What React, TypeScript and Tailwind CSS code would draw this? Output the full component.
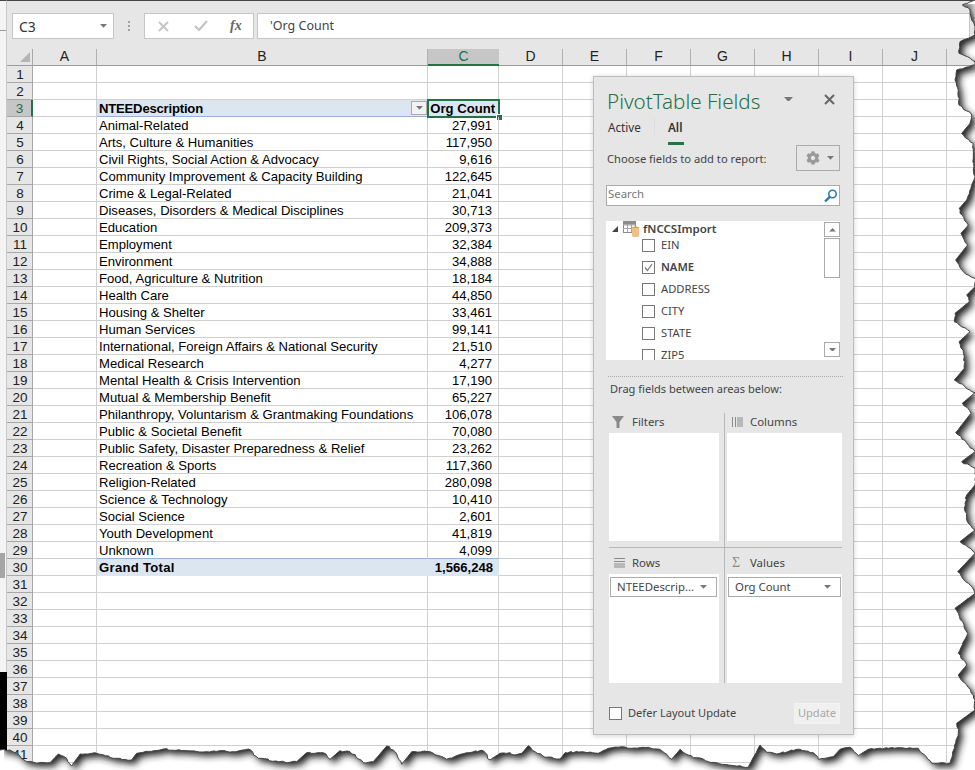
import { FaCog } from 'react-icons/fa';

const rows: [string, string][] = [
  ['Animal-Related', '27,991'],
  ['Arts, Culture & Humanities', '117,950'],
  ['Civil Rights, Social Action & Advocacy', '9,616'],
  ['Community Improvement & Capacity Building', '122,645'],
  ['Crime & Legal-Related', '21,041'],
  ['Diseases, Disorders & Medical Disciplines', '30,713'],
  ['Education', '209,373'],
  ['Employment', '32,384'],
  ['Environment', '34,888'],
  ['Food, Agriculture & Nutrition', '18,184'],
  ['Health Care', '44,850'],
  ['Housing & Shelter', '33,461'],
  ['Human Services', '99,141'],
  ['International, Foreign Affairs & National Security', '21,510'],
  ['Medical Research', '4,277'],
  ['Mental Health & Crisis Intervention', '17,190'],
  ['Mutual & Membership Benefit', '65,227'],
  ['Philanthropy, Voluntarism & Grantmaking Foundations', '106,078'],
  ['Public & Societal Benefit', '70,080'],
  ['Public Safety, Disaster Preparedness & Relief', '23,262'],
  ['Recreation & Sports', '117,360'],
  ['Religion-Related', '280,098'],
  ['Science & Technology', '10,410'],
  ['Social Science', '2,601'],
  ['Youth Development', '41,819'],
  ['Unknown', '4,099'],
];

const rightCols = ['D', 'E', 'F', 'G', 'H', 'I', 'J'];
const ui = "font-['Noto_Sans',sans-serif]";
const cellFont = "font-['Liberation_Sans',Arial,sans-serif]";

// torn edge, traced from the shot: [x, y] going from bottom left, along the bottom, up the right side
const bottomA = [[0,60],[30,60],[50,70],[80,95],[110,100],[150,98],[175,72],[200,85],[215,108],[240,72],[290,70],[340,85],[395,90],[410,70],[490,57],[620,65],[660,62],[700,65],[745,57],[775,85],[855,97],[890,95],[920,68],[970,68],[990,88],[1020,62],[1050,65],[1090,98],[1120,95],[1160,48],[1180,60],[1205,103],[1235,65],[1290,65],[1340,88],[1400,68],[1450,62]].map(([x, y]) => [x / 3, 730 + y / 3]);
const bottomB = [[15,90],[45,70],[75,68],[90,75],[110,70],[130,47],[150,65],[180,82],[225,87],[240,68],[290,65],[340,70],[370,55],[410,50],[440,55],[490,52],[530,62],[560,88],[585,58],[610,75],[670,95],[730,105],[790,112],[825,45],[845,67],[875,72],[935,58],[985,68],[1000,88],[1045,80],[1065,58],[1095,52],[1120,77],[1150,58],[1210,55],[1300,55],[1340,100],[1395,100]].map(([x, y]) => [485 + x / 3, 730 + y / 3]);
const rightLow = [[100,1060],[95,1030],[150,990],[150,960],[145,945],[100,885],[125,855],[100,820],[128,760],[90,685],[150,640],[130,610],[98,575],[150,520],[105,485],[150,450],[130,430],[118,385],[125,345],[150,315],[150,265],[110,245],[150,215],[92,158],[138,100],[112,70],[150,38]].map(([x, y]) => [925 + x / 3, 380 + y / 3]);
const rightHigh = [[88,1140],[118,1105],[118,1070],[102,1025],[135,995],[88,965],[90,940],[133,905],[125,885],[150,860],[150,835],[115,815],[92,780],[128,735],[108,700],[130,675],[105,640],[103,625],[125,600],[150,530],[145,510],[145,430],[110,400],[135,370],[140,345],[102,315],[100,270],[90,240],[95,210],[150,195],[150,185],[102,160],[105,125],[150,105],[150,80],[140,60],[135,30],[112,15],[150,0]].map(([x, y]) => [925 + x / 3, y / 3]);
const edge = [...bottomA, ...bottomB, ...rightLow, ...rightHigh];

function roughPath(pts: number[][]) {
  let out = '';
  let n = 0;
  pts.forEach((p, i) => {
    if (i === 0) {
      out = `M${p[0]} ${p[1]}`;
      return;
    }
    const prev = pts[i - 1];
    const steps = Math.max(1, Math.round(Math.hypot(p[0] - prev[0], p[1] - prev[1]) / 3));
    for (let s = 1; s <= steps; s++) {
      n++;
      const r = Math.sin(n * 12.9898) * 43758.5453;
      const j = s === steps ? 0 : (r - Math.floor(r) - 0.5) * 1.6;
      const x = prev[0] + ((p[0] - prev[0]) * s) / steps;
      const y = prev[1] + ((p[1] - prev[1]) * s) / steps;
      out += `L${(x + j).toFixed(1)} ${(y - j).toFixed(1)}`;
    }
  });
  return out;
}

const edgeLine = roughPath(edge);
const sheetShape = edgeLine + 'L975 0L0 0Z';
const outside = 'M0 0H975V770H0Z ' + sheetShape;

function Chevron({ className = '', w = 7 }: { className?: string; w?: number }) {
  return (
    <svg width={w} height={w * 0.55} viewBox="0 0 9 5" className={className}>
      <path d="M0 0h9L4.500 5z" fill="#777" />
    </svg>
  );
}

function Box({ checked }: { checked?: boolean }) {
  return (
    <div className="w-[13px] h-[13px] border border-[#777] bg-white flex items-center justify-center shrink-0">
      {checked && (
        <svg width="11" height="11" viewBox="0 0 11 11" fill="none" stroke="#777" strokeWidth="1.2">
          <path d="M2 5.500l2.500 3L9 2" />
        </svg>
      )}
    </div>
  );
}

function Field({ name, checked }: { name: string; checked?: boolean }) {
  return (
    <div className="h-[22px] shrink-0 flex items-center pl-[36px] gap-[6px]">
      <Box checked={checked} />
      <span className={`text-[11.2px] text-[#444] ${checked ? 'font-semibold' : ''}`}>{name}</span>
    </div>
  );
}

function Pill({ label, width }: { label: string; width: string }) {
  return (
    <div className={`${width} h-[20px] mx-[1px] mt-[2px] border border-[#ababab] bg-white flex items-center justify-between pl-[6px] pr-[9px]`}>
      <span className="text-[11.4px] text-[#444] whitespace-nowrap">{label}</span>
      <Chevron />
    </div>
  );
}

function PivotPanel() {
  return (
    <div className={`absolute left-[593px] top-[76px] w-[261px] h-[659px] bg-[#e6e6e6] border border-[#bdbdbd] shadow-[0_1px_5px_rgba(0,0,0,0.18)] ${ui}`}>
      {/* title */}
      <div className="mt-[12px] h-[24px] pl-[13px] flex items-center">
        <div className="w-[177px] text-[20.6px] font-light text-[#217346] leading-none whitespace-nowrap">PivotTable Fields</div>
        <Chevron w={9} className="-translate-y-[2px]" />
        <svg width="11" height="11" viewBox="0 0 11 11" className="ml-[31px] -translate-y-[2px]" stroke="#666" strokeWidth="2">
          <path d="M1 1l9 9M10 1l-9 9" />
        </svg>
      </div>

      {/* tabs */}
      <div className="mt-[5px] h-[27px] flex text-[11.7px] text-[#333]">
        <div className="ml-[14px] w-[46px] h-[18px] leading-[18px]">Active</div>
        <div className="w-px h-[17px] bg-[#dedede]" />
        <div className="ml-[13px] w-[16px] flex flex-col">
          <div className="h-[24px] leading-[18px] font-semibold">All</div>
          <div className="h-[3px] bg-[#217346]" />
        </div>
      </div>

      <div className="h-[26px] pl-[13px] pr-[13px] flex items-center justify-between">
        <span className="pt-[2px] text-[11.2px] text-[#444] whitespace-nowrap">Choose fields to add to report:</span>
        <div className="w-[44px] h-[26px] border border-[#ababab] flex items-center pl-[9px] gap-[7px]">
          <FaCog className="w-[14px] h-[14px] text-[#999]" />
          <Chevron />
        </div>
      </div>

      {/* search */}
      <div className="mt-[14px] ml-[12px] w-[234px] h-[21px] bg-white border border-[#ababab] flex items-center justify-between pl-[1px] pr-[1px]">
        <span className="pb-[3px] text-[11.4px] text-[#777]">Search</span>
        <svg width="14" height="14" viewBox="0 0 14 14" fill="none" stroke="#2b79b9" strokeWidth="1.6">
          <circle cx="8.500" cy="5" r="3.700" />
          <path d="M5.800 7.800L1 12.500" strokeWidth="2.400" />
        </svg>
      </div>

      {/* field list */}
      <div className="mt-[15px] ml-[12px] w-[234px] h-[139px] bg-white flex overflow-hidden">
        <div className="flex-1 flex flex-col">
          <div className="h-[16px] -mb-[3px] shrink-0 flex items-center pl-[6px]">
            <svg width="6" height="6" viewBox="0 0 6 6"><path d="M6 0v6H0z" fill="#444" /></svg>
            <svg width="17" height="16" viewBox="0 0 17 16" className="ml-[5px]">
              <rect x="0.500" y="0.500" width="12" height="11" fill="#fff" stroke="#8c8c8c" />
              <path d="M0 4h12M0 7.500h12M4.500 1v10M8.500 1v10" stroke="#a8a8a8" />
              <path d="M0.500 0.500h12v3h-12z" fill="#8c8c8c" />
              <ellipse cx="12.500" cy="7" rx="3.500" ry="1.500" fill="#d99a4e" />
              <rect x="9" y="7" width="7" height="8" fill="#efc08a" />
              <ellipse cx="12.500" cy="15" rx="3.500" ry="1" fill="#efc08a" />
            </svg>
            <span className="ml-[3px] text-[11.5px] font-semibold text-[#444]">fNCCSImport</span>
          </div>
          <Field name="EIN" />
          <Field name="NAME" checked />
          <Field name="ADDRESS" />
          <Field name="CITY" />
          <Field name="STATE" />
          <Field name="ZIP5" />
        </div>
        <div className="w-[16px] flex flex-col pb-[3px] pt-[1px]">
          <div className="h-[15px] border border-[#ababab] flex items-center justify-center">
            <Chevron className="rotate-180" />
          </div>
          <div className="h-[40px] mt-px bg-white border border-[#ababab]" />
          <div className="flex-1" />
          <div className="h-[15px] border border-[#ababab] flex items-center justify-center">
            <Chevron />
          </div>
        </div>
      </div>

      <div className="mt-[16px] ml-[14px] w-[235px] border-t border-dotted border-[#aaa]" />
      <div className="mt-[4px] ml-[16px] h-[16px] leading-[16px] text-[11.05px] text-[#444] whitespace-nowrap">Drag fields between areas below:</div>

      {/* areas */}
      <div className="mt-[16px] ml-[15px] w-[233px] grid grid-cols-[116px_1fr] text-[11.4px] text-[#444]">
        <div className="border-r border-[#b8b8b8] h-[134px]">
          <div className="h-[20px] pb-[2px] flex items-center pl-[3px]">
            <svg width="12" height="12" viewBox="0 0 12 12"><path d="M0 0h12L7.500 6v6h-3V6z" fill="#8a8a8a" /></svg>
            <span className="ml-[8px]">Filters</span>
          </div>
          <div className="w-[110px] h-[108px] bg-white" />
        </div>
        <div className="h-[134px] pl-[2px]">
          <div className="h-[20px] pb-[2px] flex items-center pl-[5px]">
            <svg width="11" height="10" viewBox="0 0 11 10"><path d="M.5 0v10M3.500 0v10M6 0v10M8 0v10M10 0v10" stroke="#8a8a8a" /></svg>
            <span className="ml-[7px]">Columns</span>
          </div>
          <div className="w-[115px] h-[108px] bg-white" />
        </div>
        <div className="col-span-2 h-px bg-[#b8b8b8]" />
        <div className="border-r border-[#b8b8b8] h-[135px]">
          <div className="h-[26px] pt-[4px] flex items-center pl-[5px]">
            <svg width="11" height="10" viewBox="0 0 11 10"><path d="M0 .5h11M0 3.500h11M0 6h11M0 8h11M0 10h11" stroke="#8a8a8a" /></svg>
            <span className="ml-[7px]">Rows</span>
          </div>
          <div className="w-[110px] h-[109px] bg-white overflow-hidden pt-px">
            <Pill label="NTEEDescrip..." width="w-[107px]" />
          </div>
        </div>
        <div className="h-[135px] pl-[2px]">
          <div className="h-[26px] pt-[4px] flex items-center pl-[5px]">
            <span className="w-[11px] text-[14px] leading-none text-[#8a8a8a] font-['Liberation_Serif',serif]">Σ</span>
            <span className="ml-[7px]">Values</span>
          </div>
          <div className="w-[115px] h-[109px] bg-white overflow-hidden pt-px">
            <Pill label="Org Count" width="w-[113px]" />
          </div>
        </div>
      </div>

      {/* footer */}
      <div className="mt-[20px] ml-[15px] mr-[13px] h-[21px] flex items-center">
        <Box />
        <span className="ml-[6px] text-[11.1px] text-[#444] whitespace-nowrap">Defer Layout Update</span>
        <div className="ml-auto w-[46px] h-[21px] bg-[#f0f0f0] border border-[#f3f3f3] flex items-center justify-center text-[11.1px] text-[#a8a8a8]">Update</div>
      </div>
    </div>
  );
}

function RowHead({ n, active }: { n: number; active?: boolean }) {
  return (
    <div className={`w-[26px] shrink-0 flex items-center justify-center pl-[1px] pt-[1px] border-b text-[13.5px] ${cellFont} ${active ? 'bg-[#c6c6c6] text-[#217346] border-[#a8a8a8] border-r-2 border-r-[#217346]' : 'bg-[#e6e6e6] text-[#222] border-r border-[#a8a8a8]'}`}>
      {n}
    </div>
  );
}

function BlankCells() {
  return (
    <>
      {rightCols.map((c) => (
        <div key={c} className="w-[64px] shrink-0 border-b border-r border-[#d0d0d0]" />
      ))}
      <div className="flex-1 border-b border-[#d0d0d0]" />
    </>
  );
}

function SheetRow({ n }: { n: number }) {
  const data = rows[n - 4];
  const isHead = n === 3;
  const isTotal = n === 30;
  const beforeTotal = n === 29;
  let bCell = 'border-b border-r border-[#d0d0d0]';
  let cCell = 'pr-[6px] border-b border-r border-[#d0d0d0]';
  if (isHead) {
    bCell = 'bg-[#dce6f1] border-b border-[#95b3d7] font-bold tracking-[-0.2px]';
    cCell = 'pr-[4px] bg-[#dce6f1] font-bold';
  } else if (isTotal) {
    bCell = 'bg-[#dce6f1] font-bold tracking-[0.3px]';
    cCell = 'pr-[6px] bg-[#dce6f1] font-bold';
  } else if (beforeTotal) {
    bCell = 'border-b border-r border-r-[#d0d0d0] border-b-[#95b3d7]';
    cCell = 'pr-[6px] border-b border-r border-r-[#d0d0d0] border-b-[#95b3d7]';
  }
  return (
    <div className={`h-[17px] flex text-[13.1px] leading-[18px] text-black ${cellFont}`}>
      <RowHead n={n} active={isHead} />
      <div className="w-[64px] shrink-0 border-b border-r border-[#d0d0d0]" />
      <div className={`w-[331px] shrink-0 pl-[2px] flex items-start justify-between whitespace-nowrap ${bCell}`}>
        {isHead && 'NTEEDescription'}
        {isTotal && 'Grand Total'}
        {data && data[0]}
        {isHead && (
          <div className="w-[16px] h-[14px] mt-px mr-[1px] bg-[#f2f2f2] border border-[#ababab] flex items-center justify-center">
            <Chevron />
          </div>
        )}
      </div>
      <div className={`w-[71px] shrink-0 relative text-right whitespace-nowrap ${cCell}`}>
        {isHead && 'Org Count'}
        {isTotal && '1,566,248'}
        {data && data[1]}
        {isHead && (
          <>
            <div className="absolute -left-px -top-px -right-px -bottom-px border-2 border-[#217346]" />
            <div className="absolute -right-[3px] -bottom-[3px] w-[5px] h-[5px] bg-[#217346] outline-1 outline-white" />
          </>
        )}
      </div>
      <BlankCells />
    </div>
  );
}

export default function App() {
  const nums = Array.from({ length: 41 }, (_, i) => i + 1);
  return (
    <div className="relative w-[975px] h-[770px] overflow-hidden bg-white flex">
      {/* sliver of the window behind */}
      <div className="w-[7px] shrink-0 flex flex-col bg-[#f4f4f4] border-t border-[#444] border-r border-r-[#c8c8c8]">
        <div className="h-[29px]" />
        <div className="h-px bg-[#999]" />
        <div className="h-[522px]" />
        <div className="h-[25px] w-[5px] bg-[#a6a6a6]" />
        <div className="h-[94px]" />
        <div className="h-[78px] w-[7px] bg-black" />
      </div>

      <div className="flex-1 min-w-0 flex flex-col">
        {/* formula bar */}
        <div className="h-[49px] shrink-0 bg-[#e6e6e6] border-t border-[#444] relative">
          <div className={`flex items-start pt-[12px] pl-[5px] ${ui}`}>
            <div className="w-[102px] h-[26px] bg-white border border-[#c6c6c6] flex items-center justify-between pl-[6px] pr-[6px] text-[14px] text-[#333]">
              C3
              <Chevron />
            </div>
            <div className="w-[30px] h-[26px] flex flex-col items-center justify-center gap-[2px]">
              <div className="w-[2px] h-[2px] bg-[#a0a0a0]" />
              <div className="w-[2px] h-[2px] bg-[#a0a0a0]" />
              <div className="w-[2px] h-[2px] bg-[#a0a0a0]" />
            </div>
            <div className="w-[110px] h-[26px] bg-white border border-[#c6c6c6] flex items-center pl-[13px]">
              <svg width="11" height="11" viewBox="0 0 11 11" stroke="#c4c4c4" strokeWidth="1.8"><path d="M1 1l9 9M10 1l-9 9" /></svg>
              <svg width="14" height="12" viewBox="0 0 14 12" fill="none" stroke="#c4c4c4" strokeWidth="2.200" className="ml-[25px]"><path d="M1 6l4 4 8-9" /></svg>
              <span className="ml-[22px] text-[14px] italic text-[#666] font-['Liberation_Serif',serif] font-bold leading-none">fx</span>
            </div>
            <div className="ml-[3px] flex-1 h-[26px] bg-white border border-[#c6c6c6] pl-[12px] pt-[1px] mr-[5px] flex items-center text-[12.5px] text-[#444]">'Org Count</div>
          </div>
        </div>

        {/* column headers */}
        <div className={`h-[17px] shrink-0 flex bg-[#e6e6e6] border-b border-[#9b9b9b] text-[14px] text-[#222] leading-[15px] ${cellFont}`}>
          <div className="w-[26px] shrink-0 border-r border-[#a8a8a8] pt-[3px] pl-[13px]">
            <svg width="10" height="10" viewBox="0 0 10 10"><path d="M10 0v10H0z" fill="#b5b5b5" /></svg>
          </div>
          <div className="w-[64px] shrink-0 border-r border-[#b0b0b0] text-center">A</div>
          <div className="w-[331px] shrink-0 border-r border-[#b0b0b0] text-center">B</div>
          <div className="w-[71px] shrink-0 -mb-px h-[17px] bg-[#c6c6c6] border-b-2 border-[#217346] text-center text-[#217346]">C</div>
          {rightCols.map((c) => (
            <div key={c} className="w-[64px] shrink-0 border-r border-[#b0b0b0] text-center">{c}</div>
          ))}
        </div>

        {/* rows */}
        {nums.map((n) => (
          <SheetRow key={n} n={n} />
        ))}
      </div>

      <PivotPanel />

      {/* torn paper edge */}
      <svg width="975" height="770" viewBox="0 0 975 770" className="absolute left-0 top-0 pointer-events-none">
        <defs>
          <clipPath id="outside">
            <path d={outside} clipRule="evenodd" />
          </clipPath>
          <filter id="soft" filterUnits="userSpaceOnUse" x="0" y="0" width="975" height="770">
            <feGaussianBlur stdDeviation="3.500" />
          </filter>
        </defs>
        <path d={outside} fill="#fff" fillRule="evenodd" />
        <g clipPath="url(#outside)">
          <path d={sheetShape} fill="#222" filter="url(#soft)" transform="translate(4 4)" />
        </g>
        <path d={edgeLine} fill="none" stroke="#444" strokeWidth="1" />
      </svg>
    </div>
  );
}
